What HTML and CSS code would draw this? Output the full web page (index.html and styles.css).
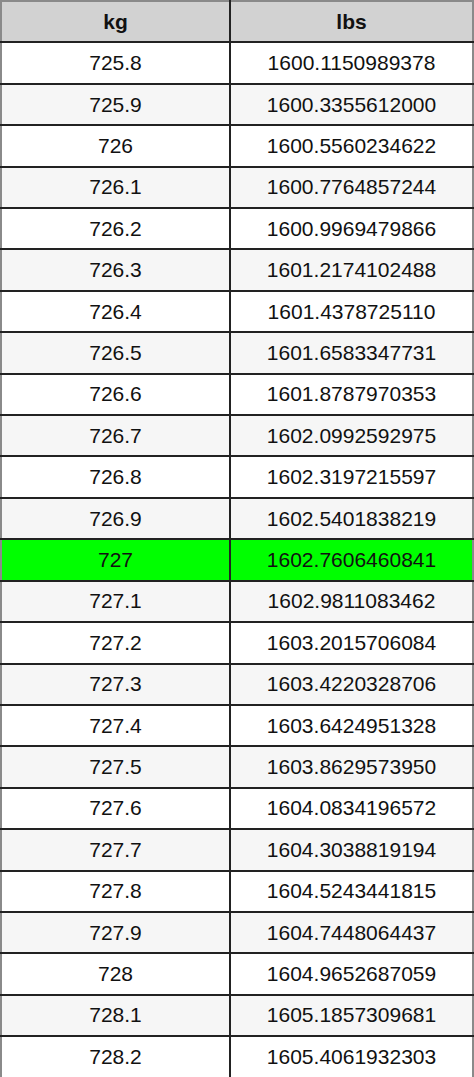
FILE: index.html
```html
<!DOCTYPE html>
<html>
<head>
<meta charset="utf-8">
<link rel="stylesheet" href="styles.css">
</head>
<body>
<table class="conv">
<thead>
<tr><th class="c-kg">kg</th><th class="c-lbs">lbs</th></tr>
</thead>
<tbody>
<tr><td>725.8</td><td>1600.1150989378</td></tr>
<tr><td>725.9</td><td>1600.3355612000</td></tr>
<tr><td>726</td><td>1600.5560234622</td></tr>
<tr><td>726.1</td><td>1600.7764857244</td></tr>
<tr><td>726.2</td><td>1600.9969479866</td></tr>
<tr><td>726.3</td><td>1601.2174102488</td></tr>
<tr><td>726.4</td><td>1601.4378725110</td></tr>
<tr><td>726.5</td><td>1601.6583347731</td></tr>
<tr><td>726.6</td><td>1601.8787970353</td></tr>
<tr><td>726.7</td><td>1602.0992592975</td></tr>
<tr><td>726.8</td><td>1602.3197215597</td></tr>
<tr><td>726.9</td><td>1602.5401838219</td></tr>
<tr class="hl"><td>727</td><td>1602.7606460841</td></tr>
<tr><td>727.1</td><td>1602.9811083462</td></tr>
<tr><td>727.2</td><td>1603.2015706084</td></tr>
<tr><td>727.3</td><td>1603.4220328706</td></tr>
<tr><td>727.4</td><td>1603.6424951328</td></tr>
<tr><td>727.5</td><td>1603.8629573950</td></tr>
<tr><td>727.6</td><td>1604.0834196572</td></tr>
<tr><td>727.7</td><td>1604.3038819194</td></tr>
<tr><td>727.8</td><td>1604.5243441815</td></tr>
<tr><td>727.9</td><td>1604.7448064437</td></tr>
<tr><td>728</td><td>1604.9652687059</td></tr>
<tr><td>728.1</td><td>1605.1857309681</td></tr>
<tr><td>728.2</td><td>1605.4061932303</td></tr>
</tbody>
</table>
</body>
</html>
```

FILE: styles.css
```css
html, body {
  margin: 0;
  padding: 0;
  background: #ffffff;
}

.conv {
  width: 474px;
  height: 1077px;
  border-collapse: collapse;
  table-layout: fixed;
  font-family: "Liberation Sans", Arial, sans-serif;
  font-size: 21px;
  color: #111111;
}

.conv tr {
  height: 41.42px;
}

.conv th,
.conv td {
  border: 2px solid #222222;
  text-align: center;
  vertical-align: middle;
  padding: 0;
}

.conv th {
  background: #d2d2d2;
  font-weight: bold;
  font-size: 21px;
}

.c-kg {
  width: 227px;
}

.conv tbody tr:nth-child(odd) td {
  background: #ffffff;
}

.conv tbody tr:nth-child(even) td {
  background: #f6f6f6;
}

.conv tbody tr.hl td {
  background: #00ff00;
}

.conv tr > :first-child {
  border-left-color: #8a8a8a;
}

.conv tr > :last-child {
  border-right-color: #8a8a8a;
}

.conv thead th {
  border-top-color: #8a8a8a;
}

.conv tbody tr:last-child td {
  border-bottom-color: #8a8a8a;
}
```
